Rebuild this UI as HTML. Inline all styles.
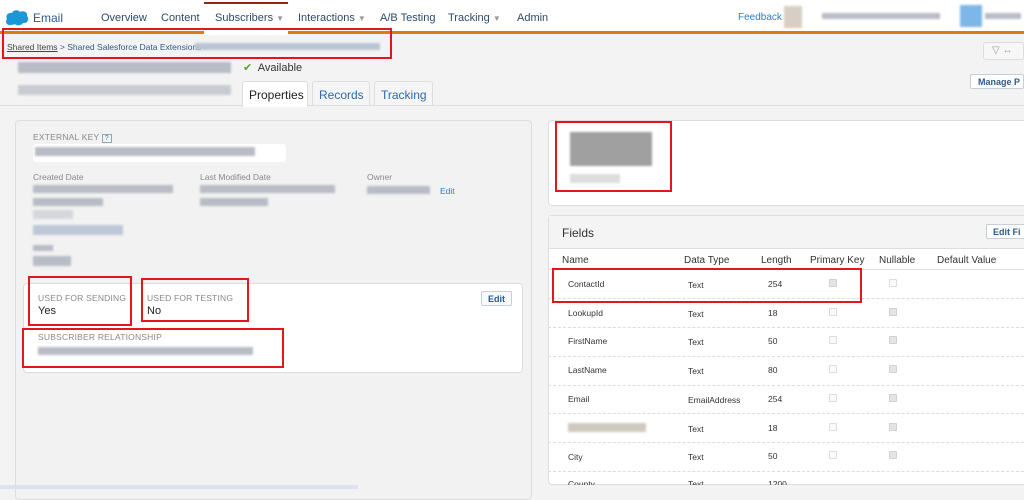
<!DOCTYPE html>
<html><head><style>
*{box-sizing:border-box;margin:0;padding:0}
body{width:1024px;height:489px;overflow:hidden;background:#f3f3f3;font-family:"Liberation Sans",Arial,sans-serif;position:relative;color:#333}
.a{position:absolute}
.blur{position:absolute;background:#b8bcc4;filter:blur(1px)}
.red{position:absolute;border:2px solid #e3161b}
.nav{font-size:11px;color:#2d4a6b}
.lbl{font-size:8.5px;color:#888;letter-spacing:.2px}
.cb{position:absolute;width:8px;height:8px;border:1px solid #ddd;background:#fafafa;border-radius:1px}
.cb.on{background:#e4e4e4;border-color:#d0d0d0}
.ft{position:absolute;font-size:8.5px;color:#333}
.dash{position:absolute;left:548px;width:476px;border-top:1px dashed #ddd}
</style></head><body>
<div class="a" style="left:0;top:0;width:1024px;height:32px;background:#fff"></div>
<div class="a" style="left:0;top:31px;width:1024px;height:3px;background:#df7a12"></div>
<div class="a" style="left:204px;top:2px;width:84px;height:33px;background:#fff;border-top:2px solid #8a2a12"></div>
<svg class="a" style="left:5px;top:9px" width="24" height="17" viewBox="0 0 24 17"><path d="M5 16C1 16 0 12 2 10 0 7 3 3 7 4 8 1 13 0 15 3 18 1 23 3 22 7 25 10 22 15 18 14 16 17 11 17 10 15 8 16 6 16 5 16Z" fill="#1b96d6"/></svg>
<div class="a" style="left:33px;top:11px;font-size:12px;color:#2d5a8a">Email</div>
<div class="a nav" style="left:101px;top:12px">Overview</div>
<div class="a nav" style="left:161px;top:12px">Content</div>
<div class="a nav" style="left:215px;top:12px">Subscribers <span style="color:#999;font-size:8px">▼</span></div>
<div class="a nav" style="left:298px;top:12px">Interactions <span style="color:#999;font-size:8px">▼</span></div>
<div class="a nav" style="left:380px;top:12px">A/B Testing</div>
<div class="a nav" style="left:448px;top:12px">Tracking <span style="color:#999;font-size:8px">▼</span></div>
<div class="a nav" style="left:517px;top:12px">Admin</div>
<div class="a" style="left:738px;top:12px;font-size:10px;color:#2e7cc4">Feedback</div>
<div class="blur" style="left:784px;top:6px;width:18px;height:22px;background:#d7cfc3"></div>
<div class="blur" style="left:822px;top:13px;width:118px;height:6px"></div>
<div class="blur" style="left:960px;top:5px;width:22px;height:22px;background:#7db7ea"></div>
<div class="blur" style="left:985px;top:13px;width:36px;height:6px"></div>
<div class="a" style="left:7px;top:42px;font-size:8.5px;color:#2d5a8a"><span style="text-decoration:underline;color:#444">Shared Items</span> &gt; Shared Salesforce Data Extensions &gt;</div>
<div class="blur" style="left:195px;top:43px;width:185px;height:7px;background:#b9c4d2"></div>
<div class="red" style="left:2px;top:28px;width:390px;height:31px"></div>
<div class="a" style="left:983px;top:42px;width:41px;height:18px;border:1px solid #ddd;border-radius:3px;background:#f7f7f7;font-size:10px;color:#999;padding:2px 0 0 8px">▽ ↔</div>
<div class="blur" style="left:18px;top:62px;width:213px;height:11px"></div>
<div class="blur" style="left:18px;top:85px;width:213px;height:10px;background:#c8ccd2"></div>
<div class="a" style="left:243px;top:61px;font-size:11px;color:#333"><span style="color:#5aa02c">✔</span>&nbsp; Available</div>
<div class="a" style="left:970px;top:74px;width:54px;height:15px;border:1px solid #c8ced6;border-radius:2px;background:#fff;font-size:9px;font-weight:bold;color:#2d5a8a;padding:2px 0 0 7px">Manage P</div>
<div class="a" style="left:0;top:105px;width:1024px;height:1px;background:#ddd"></div>
<div class="a" style="left:242px;top:81px;width:66px;height:26px;background:#fff;border:1px solid #ddd;border-bottom:none;border-radius:3px 3px 0 0;font-size:12px;color:#222;padding:6px 0 0 6px">Properties</div>
<div class="a" style="left:312px;top:81px;width:58px;height:25px;background:#f5f5f5;border:1px solid #ddd;border-radius:3px 3px 0 0;font-size:12px;color:#2d6aa7;padding:6px 0 0 6px">Records</div>
<div class="a" style="left:374px;top:81px;width:59px;height:25px;background:#f5f5f5;border:1px solid #ddd;border-radius:3px 3px 0 0;font-size:12px;color:#2d6aa7;padding:6px 0 0 6px">Tracking</div>
<div class="a" style="left:15px;top:120px;width:517px;height:380px;background:#f2f2f2;border:1px solid #ddd;border-radius:4px"></div>
<div class="a lbl" style="left:33px;top:132px">EXTERNAL KEY <span style="border:1px solid #8ab;color:#4a7ab0;font-size:7px;padding:0 2px">?</span></div>
<div class="a" style="left:33px;top:144px;width:253px;height:18px;background:#fff;border-radius:3px"></div>
<div class="blur" style="left:35px;top:147px;width:220px;height:9px"></div>
<div class="a" style="left:33px;top:172px;font-size:8.5px;color:#888">Created Date</div>
<div class="a" style="left:200px;top:172px;font-size:8.5px;color:#888">Last Modified Date</div>
<div class="a" style="left:367px;top:172px;font-size:8.5px;color:#888">Owner</div>
<div class="blur" style="left:33px;top:185px;width:140px;height:8px"></div>
<div class="blur" style="left:33px;top:198px;width:70px;height:8px"></div>
<div class="blur" style="left:33px;top:210px;width:40px;height:9px;background:#d5d7dc"></div>
<div class="blur" style="left:33px;top:225px;width:90px;height:10px;background:#bdc8d6"></div>
<div class="blur" style="left:33px;top:245px;width:20px;height:6px"></div>
<div class="blur" style="left:33px;top:256px;width:38px;height:10px"></div>
<div class="blur" style="left:200px;top:185px;width:135px;height:8px"></div>
<div class="blur" style="left:200px;top:198px;width:68px;height:8px"></div>
<div class="blur" style="left:367px;top:186px;width:63px;height:8px"></div>
<div class="a" style="left:440px;top:186px;font-size:8.5px;color:#2e7cc4">Edit</div>
<div class="a" style="left:23px;top:283px;width:500px;height:90px;background:#fff;border:1px solid #ddd;border-radius:4px"></div>
<div class="a lbl" style="left:38px;top:293px">USED FOR SENDING</div>
<div class="a" style="left:38px;top:305px;font-size:11px;color:#222">Yes</div>
<div class="a lbl" style="left:147px;top:293px">USED FOR TESTING</div>
<div class="a" style="left:147px;top:305px;font-size:11px;color:#222">No</div>
<div class="a lbl" style="left:38px;top:332px">SUBSCRIBER RELATIONSHIP</div>
<div class="blur" style="left:38px;top:347px;width:215px;height:8px"></div>
<div class="a" style="left:481px;top:291px;width:31px;height:15px;border:1px solid #c8ced6;border-radius:2px;background:#f7f9fb;font-size:9px;font-weight:bold;color:#2d5a8a;padding:2px 0 0 6px">Edit</div>
<div class="red" style="left:28px;top:276px;width:104px;height:50px"></div>
<div class="red" style="left:141px;top:278px;width:108px;height:44px"></div>
<div class="red" style="left:22px;top:328px;width:262px;height:40px"></div>
<div class="a" style="left:548px;top:120px;width:480px;height:86px;background:#fff;border:1px solid #ddd;border-radius:4px"></div>
<div class="blur" style="left:570px;top:132px;width:82px;height:34px;background:#a0a0a0"></div>
<div class="blur" style="left:570px;top:174px;width:50px;height:9px;background:#ddd"></div>
<div class="red" style="left:555px;top:121px;width:117px;height:71px"></div>
<div class="a" style="left:548px;top:215px;width:480px;height:270px;background:#fff;border:1px solid #ddd;border-radius:4px"></div>
<div class="a" style="left:549px;top:216px;width:475px;height:33px;background:#f4f4f4;border-bottom:1px solid #ddd"></div>
<div class="a" style="left:562px;top:226px;font-size:12px;color:#333">Fields</div>
<div class="a" style="left:986px;top:224px;width:40px;height:15px;border:1px solid #c8ced6;border-radius:2px;background:#fff;font-size:9px;font-weight:bold;color:#2d5a8a;padding:2px 0 0 6px">Edit Fi</div>
<div class="a" style="left:549px;top:250px;width:475px;height:20px;border-bottom:1px solid #ddd"></div>
<div class="ft" style="left:562px;top:255px;font-size:10px">Name</div>
<div class="ft" style="left:684px;top:255px;font-size:10px">Data Type</div>
<div class="ft" style="left:761px;top:255px;font-size:10px">Length</div>
<div class="ft" style="left:810px;top:255px;font-size:10px">Primary Key</div>
<div class="ft" style="left:879px;top:255px;font-size:10px">Nullable</div>
<div class="ft" style="left:937px;top:255px;font-size:10px">Default Value</div>
<div class="ft" style="left:568px;top:279px">ContactId</div><div class="ft" style="left:688px;top:280px">Text</div><div class="ft" style="left:768px;top:279px">254</div><div class="cb on" style="left:829px;top:279px"></div><div class="cb" style="left:889px;top:279px"></div>
<div class="dash" style="top:298px"></div>
<div class="ft" style="left:568px;top:308px">LookupId</div><div class="ft" style="left:688px;top:309px">Text</div><div class="ft" style="left:768px;top:308px">18</div><div class="cb" style="left:829px;top:308px"></div><div class="cb on" style="left:889px;top:308px"></div>
<div class="dash" style="top:327px"></div>
<div class="ft" style="left:568px;top:336px">FirstName</div><div class="ft" style="left:688px;top:337px">Text</div><div class="ft" style="left:768px;top:336px">50</div><div class="cb" style="left:829px;top:336px"></div><div class="cb on" style="left:889px;top:336px"></div>
<div class="dash" style="top:356px"></div>
<div class="ft" style="left:568px;top:365px">LastName</div><div class="ft" style="left:688px;top:366px">Text</div><div class="ft" style="left:768px;top:365px">80</div><div class="cb" style="left:829px;top:365px"></div><div class="cb on" style="left:889px;top:365px"></div>
<div class="dash" style="top:385px"></div>
<div class="ft" style="left:568px;top:394px">Email</div><div class="ft" style="left:688px;top:395px">EmailAddress</div><div class="ft" style="left:768px;top:394px">254</div><div class="cb" style="left:829px;top:394px"></div><div class="cb on" style="left:889px;top:394px"></div>
<div class="dash" style="top:413px"></div>
<div class="blur" style="left:568px;top:423px;width:78px;height:9px;background:#cfcac0"></div><div class="ft" style="left:688px;top:424px">Text</div><div class="ft" style="left:768px;top:423px">18</div><div class="cb" style="left:829px;top:423px"></div><div class="cb on" style="left:889px;top:423px"></div>
<div class="dash" style="top:442px"></div>
<div class="ft" style="left:568px;top:452px">City</div><div class="ft" style="left:688px;top:452px">Text</div><div class="ft" style="left:768px;top:451px">50</div><div class="cb" style="left:829px;top:451px"></div><div class="cb on" style="left:889px;top:451px"></div>
<div class="dash" style="top:471px"></div>
<div class="a" style="left:548px;top:476px;width:476px;height:9px;overflow:hidden">
<div class="ft" style="left:20px;top:3px">County</div><div class="ft" style="left:140px;top:3px">Text</div><div class="ft" style="left:220px;top:3px">1200</div></div>
<div class="red" style="left:552px;top:268px;width:310px;height:35px"></div>
<div class="a" style="left:0;top:485px;width:358px;height:4px;background:#dde3ee"></div>
</body></html>
